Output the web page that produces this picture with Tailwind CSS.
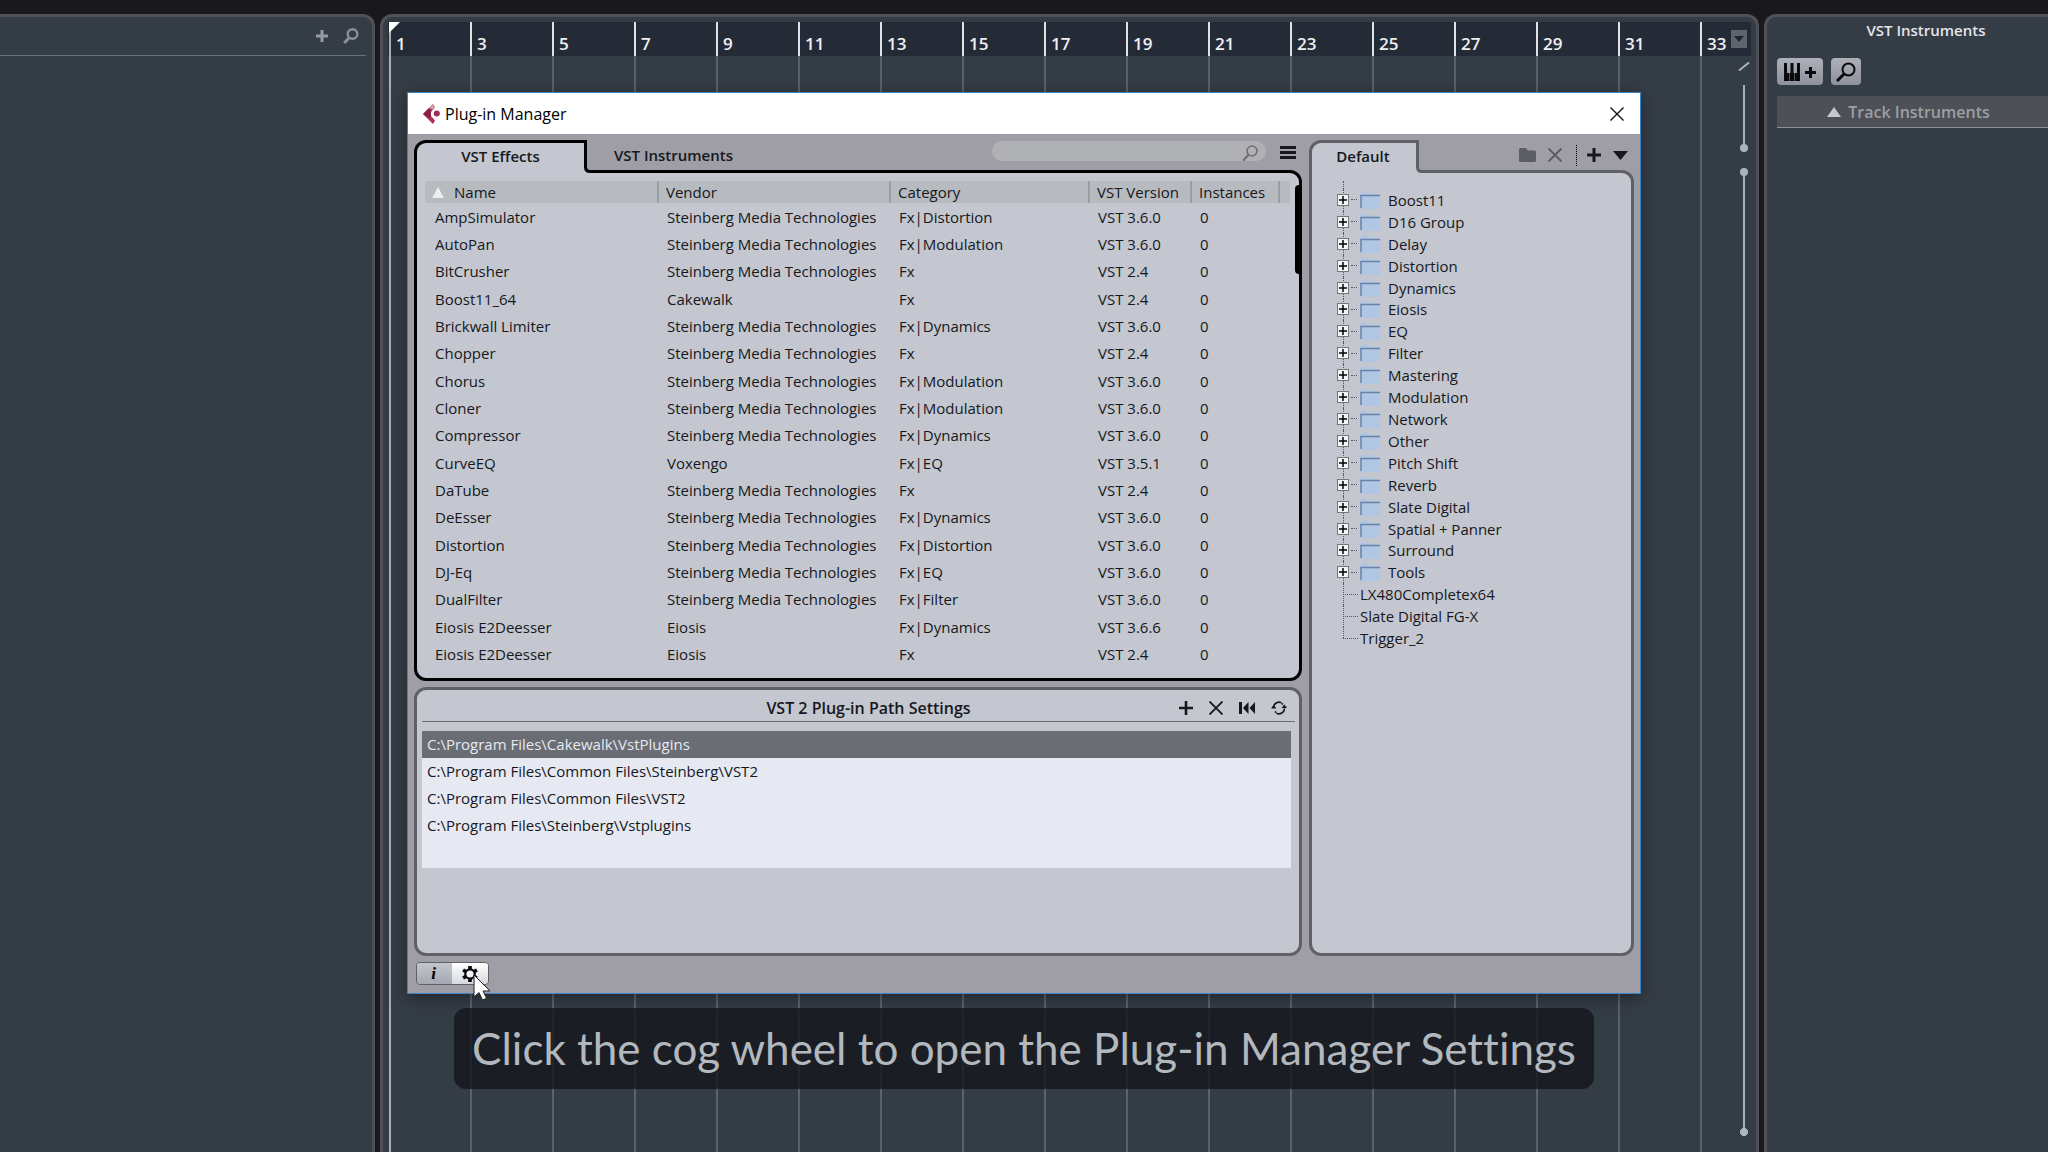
<!DOCTYPE html>
<html lang="en">
<head>
<meta charset="utf-8">
<title>Plug-in Manager</title>
<script src="https://cdn.jsdelivr.net/npm/@tailwindcss/browser@4"></script>
</head>
<body class="relative h-screen overflow-hidden bg-[#19191c] font-['Open_Sans',sans-serif] text-[15px] leading-5 text-[#16181d]">

<!-- Project window -->
<div class="grid h-full grid-cols-[375px_minmax(0,1fr)_284px] gap-[5px] pt-3.5">

  <!-- Inspector -->
  <aside class="rounded-tr-xl border-t-3 border-r-3 border-[#505158] bg-[#343c45] pr-1.5">
    <div class="flex h-[39px] items-center justify-end gap-[15px] border-b border-[#69727a] pr-[7px]">
      <button aria-label="Add"><svg class="block size-3" viewBox="0 0 12 12"><path d="M6 0v12M0 6h12" stroke="#969ba1" stroke-width="3"/></svg></button>
      <button aria-label="Find"><svg class="block size-4" viewBox="0 0 16 16" fill="none" stroke="#8a9097"><circle cx="9.500" cy="6" r="4.800" stroke-width="2.400"/><path d="M6 10 1.200 15" stroke-width="3"/></svg></button>
    </div>
  </aside>

  <!-- Arrangement -->
  <main class="flex flex-col rounded-t-xl border-x-3 border-t-3 border-[#505158] bg-[#343c45] px-[5px] pt-[5px]">
    <div class="relative flex min-h-0 flex-1">
      <div id="ruler" class="flex min-w-0 flex-1 overflow-hidden bg-linear-to-b from-[#242b37] from-[34px] to-[#343c45] to-[34px] pl-px"></div>
      <button aria-label="Ruler format" class="absolute top-2 right-1 flex h-[18px] w-4 items-center justify-center bg-[#5f656f]"><svg class="h-1.5 w-2.5" viewBox="0 0 10 6"><path d="M0 0h10L5 6z" fill="#20262f"/></svg></button>
      <div class="absolute top-10 right-px bottom-0 flex w-3 flex-col items-center pb-4">
        <svg class="h-[9px] w-3" viewBox="0 0 12 9"><path d="M1 8.500 11 .5" stroke="#aab2b8" stroke-width="2"/></svg>
        <input type="range" aria-label="Track height" min="0" max="100" value="100" class="mt-3.5 h-[67px] w-2 appearance-none bg-[linear-gradient(#aab2b8,#aab2b8)] bg-[length:2px_100%] bg-center bg-no-repeat [writing-mode:vertical-lr] [&::-webkit-slider-thumb]:size-2 [&::-webkit-slider-thumb]:appearance-none [&::-webkit-slider-thumb]:rounded-full [&::-webkit-slider-thumb]:bg-[#aab6be]">
        <input type="range" aria-label="Vertical scroll" min="0" max="100" value="0" class="mt-4 min-h-0 w-2 flex-1 appearance-none bg-[radial-gradient(circle_at_50%_calc(100%-4px),#aab6be_4px,transparent_4px),linear-gradient(#aab2b8,#aab2b8)] bg-[length:100%_100%,2px_100%] bg-center bg-no-repeat [writing-mode:vertical-lr] [&::-webkit-slider-thumb]:size-2 [&::-webkit-slider-thumb]:appearance-none [&::-webkit-slider-thumb]:rounded-full [&::-webkit-slider-thumb]:bg-[#aab6be]">
      </div>
    </div>
  </main>

  <!-- Instrument rack -->
  <aside class="rounded-tl-xl border-t-3 border-l-3 border-[#505158] bg-[#343c45] pl-2.5">
    <h2 class="pt-[3px] pr-2 pb-[18px] pl-[35px] text-center font-semibold text-[#e4e6e9]">VST Instruments</h2>
    <div class="flex gap-2">
      <button aria-label="Add track instrument" class="flex h-[27px] w-[46px] items-center justify-center rounded-sm bg-linear-to-b from-[#adb0b8] to-[#8f929b]"><svg class="h-[18px] w-8" viewBox="0 0 32 18" fill="#0b0b0e"><path d="M0 0h3v10h2v8H0zM6.500 0h3v10h1v8h-5v-8h1zM13 0h3v18h-5v-8h2z"/><path d="M26.500 4v11M21 9.500h11" stroke="#0b0b0e" stroke-width="3"/></svg></button>
      <button aria-label="Find instruments" class="flex h-[27px] w-[30px] items-center justify-center rounded-sm bg-linear-to-b from-[#adb0b8] to-[#8f929b]"><svg class="size-5" viewBox="0 0 20 20" fill="none" stroke="#0b0b0e"><circle cx="12.500" cy="7.500" r="6" stroke-width="2"/><path d="m8 12-7 7" stroke-width="3"/></svg></button>
    </div>
    <button class="mt-[11px] flex h-8 w-full items-center justify-center gap-[7px] border-b border-[#8b9196] bg-[#4e5057] pr-2 text-base leading-5 font-semibold text-[#9c9fa4]"><svg class="h-2.5 w-3.5" viewBox="0 0 14 10"><path d="M7 0l7 10H0z" fill="#c6c9cd"/></svg>Track Instruments</button>
  </aside>
</div>

<!-- Dialog and caption -->
<div class="absolute inset-0 flex flex-col items-center gap-3.5 pt-[92px]">
  <section role="dialog" aria-labelledby="title" class="flex w-[1234px] flex-col border border-[#3a86c4] bg-[#9f9ea6] shadow-[0_4px_16px_rgba(0,0,0,0.35)]">
    <header class="flex h-[41px] items-center bg-white pr-4 pl-[15px]">
      <svg class="h-5 w-[17px]" viewBox="0 0 17 20"><path d="M0 10 10 0l2 3.500L8 8v4l4 4.500L10 20z" fill="#a83258"/><path d="M0 10 6 4l2 4v4l-2 2z" fill="#8b1f45"/><path d="M10 0l2 3.500-2 2.200L6 4z" fill="#cf9aac"/><circle cx="13.800" cy="9.500" r="3" fill="#a12c52"/></svg>
      <h1 id="title" class="flex-1 pl-[5px] text-base text-black">Plug-in Manager</h1>
      <button aria-label="Close"><svg class="size-3.5" viewBox="0 0 14 14"><path d="m.5.5 13 13m0-13-13 13" stroke="#111" stroke-width="1.400"/></svg></button>
    </header>

    <div class="grid grid-cols-[888px_minmax(0,1fr)] gap-[7px] px-1.5 pt-1.5">
      <div class="flex flex-col gap-1.5">
        <!-- Plug-in list -->
        <div>
          <div class="flex h-[30px]">
            <button class="relative z-10 h-[33px] w-[173px] rounded-tl-xl border-t-3 border-x-3 border-black bg-[#c4c7cf] pb-1 font-semibold">VST Effects
              <svg class="absolute right-[-8px] bottom-0 size-2" viewBox="0 0 8 8"><path d="M0 0V8H8V6.500H6Q1.500 6.500 1.500 2V0Z" fill="#c4c7cf"/><path d="M1.500 0V2Q1.500 6.500 6 6.500H8" fill="none" stroke="#000" stroke-width="3"/></svg>
            </button>
            <button class="h-[30px] pl-[27px] font-semibold">VST Instruments</button>
            <label class="mt-px mr-3.5 ml-auto flex h-5 w-[274px] items-center rounded-full bg-[#b0b1b4] pr-2 pl-3">
              <input type="search" aria-label="Search plug-ins" class="min-w-0 flex-1 bg-transparent outline-none">
              <svg class="mt-1 size-4" viewBox="0 0 16 16" fill="none" stroke="#6d6e74"><circle cx="10" cy="6" r="5" stroke-width="1.600"/><path d="m6.500 9.800-5.500 6" stroke-width="2"/></svg>
            </label>
            <button aria-label="Display options" class="mr-1.5 flex h-6 w-4 flex-col justify-center gap-0.5"><span class="h-[3px] bg-[#16181d]"></span><span class="h-[3px] bg-[#16181d]"></span><span class="h-[3px] bg-[#16181d]"></span></button>
          </div>
          <div class="relative rounded-xl rounded-tl-none border-3 border-black bg-[#c4c7cf] pt-2 pr-[9px] pb-2.5 pl-2">
            <table class="h-[487px] w-full table-fixed text-left">
              <colgroup><col class="w-[233px]"><col class="w-[232px]"><col class="w-[199px]"><col class="w-[102px]"><col class="w-[88px]"><col></colgroup>
              <thead class="bg-[#b7babf]">
                <tr class="h-[22px]">
                  <th class="border-r-2 border-[#9b9ea3] p-0 pl-[7px] font-normal"><span class="flex items-center gap-2.5"><svg class="h-[11px] w-3" viewBox="0 0 12 11"><path d="M6 0l6 11H0z" fill="#eceef1"/></svg>Name</span></th>
                  <th class="border-r-2 border-[#9b9ea3] p-0 pl-[7px] font-normal">Vendor</th>
                  <th class="border-r-2 border-[#9b9ea3] p-0 pl-[7px] font-normal">Category</th>
                  <th class="border-r-2 border-[#9b9ea3] p-0 pl-[7px] font-normal whitespace-nowrap">VST Version</th>
                  <th class="border-r-2 border-[#9b9ea3] p-0 pl-[7px] font-normal">Instances</th>
                  <th class="p-0"></th>
                </tr>
              </thead>
              <tbody id="plugins"></tbody>
            </table>
            <div class="absolute top-3 right-0 h-[89px] w-1 rounded-l-full bg-black"></div>
          </div>
        </div>

        <!-- Path settings -->
        <div class="h-[269px] rounded-xl border-3 border-[#606167] bg-[#c4c7cf] pt-1 pr-1 pl-[5px]">
          <div class="grid h-7 grid-cols-[1fr_auto_1fr] items-center border-b border-[#6b6d74]">
            <h2 class="col-start-2 pl-5 text-base leading-5 font-semibold">VST 2 Plug-in Path Settings</h2>
            <div class="flex items-center justify-end gap-4 pr-2">
              <button aria-label="Add path"><svg class="block size-3.5" viewBox="0 0 14 14"><path d="M7 0v14M0 7h14" stroke="#16181d" stroke-width="2.600"/></svg></button>
              <button aria-label="Remove path"><svg class="block size-3.5" viewBox="0 0 14 14"><path d="m.5.5 13 13m0-13-13 13" stroke="#16181d" stroke-width="1.800"/></svg></button>
              <button aria-label="Reset paths"><svg class="block h-3 w-4" viewBox="0 0 16 12" fill="#16181d"><path d="M0 0h3v12H0zM9.500 0v12L4 6zM16 0v12l-5.500-6z"/></svg></button>
              <button aria-label="Rescan"><svg class="block size-4" viewBox="0 0 16 16" fill="none" stroke="#16181d" stroke-width="1.700"><path d="M2.500 7.500A5.500 5.500 0 0 1 10.500 2.800M13.500 8.500A5.500 5.500 0 0 1 5.500 13.200M4 11.500l1.200 1.200M12 4.500l-1.200-1.200"/><path d="M0 8.500h5.400L2.700 5zM10.600 8H16l-2.700-3.500z" fill="#16181d" stroke="none"/></svg></button>
            </div>
          </div>
          <ul class="mt-[9px] mr-1 h-[137px] bg-[#e6e9f2]">
            <li class="h-[27px] bg-[#6b6d75] py-[3px] pl-[5px] text-[#e6e9f2]">C:\Program Files\Cakewalk\VstPlugins</li>
            <li class="h-[27px] py-[3px] pl-[5px]">C:\Program Files\Common Files\Steinberg\VST2</li>
            <li class="h-[27px] py-[3px] pl-[5px]">C:\Program Files\Common Files\VST2</li>
            <li class="h-[27px] py-[3px] pl-[5px]">C:\Program Files\Steinberg\Vstplugins</li>
          </ul>
        </div>
      </div>

      <!-- Collection -->
      <div class="flex flex-col">
        <div class="flex h-[30px]">
          <button class="relative z-10 h-[33px] w-[110px] rounded-tl-xl border-t-3 border-x-3 border-[#606167] bg-[#c4c7cf] pr-0.5 pb-1 font-semibold">Default
            <svg class="absolute right-[-8px] bottom-0 size-2" viewBox="0 0 8 8"><path d="M0 0V8H8V6.500H6Q1.500 6.500 1.500 2V0Z" fill="#c4c7cf"/><path d="M1.500 0V2Q1.500 6.500 6 6.500H8" fill="none" stroke="#606167" stroke-width="3"/></svg>
          </button>
          <div class="ml-auto flex items-center pr-1.5">
            <button aria-label="New folder"><svg class="h-3.5 w-[17px]" viewBox="0 0 17 14"><path d="M0 1.500Q0 0 1.500 0H7l2 2.500h6.500Q17 2.500 17 4v8.500Q17 14 15.500 14h-14Q0 14 0 12.500z" fill="#5d5e65"/></svg></button>
            <button aria-label="Delete" class="mr-3.5 ml-3"><svg class="size-3.5" viewBox="0 0 14 14"><path d="m.5.5 13 13m0-13-13 13" stroke="#5d5e65" stroke-width="2"/></svg></button>
            <span class="h-[21px] border-l border-dotted border-black"></span>
            <button aria-label="Add collection" class="mr-3 ml-2.5"><svg class="size-3.5" viewBox="0 0 14 14"><path d="M7 0v14M0 7h14" stroke="#16181d" stroke-width="3"/></svg></button>
            <button aria-label="Select collection"><svg class="h-[9px] w-[15px]" viewBox="0 0 15 9"><path d="M0 0h15L7.500 9z" fill="#16181d"/></svg></button>
          </div>
        </div>
        <div class="flex-1 rounded-xl rounded-tl-none border-3 border-[#606167] bg-[#c4c7cf] pt-2 pl-[30px]">
          <div class="ml-px h-2 border-l border-dotted border-[#55575e]"></div>
          <ul id="tree" class="grid h-[460px] auto-rows-fr"></ul>
        </div>
      </div>
    </div>

    <footer class="flex px-2 pt-1.5 pb-2">
      <div class="flex h-[23px] w-[73px] overflow-hidden rounded-sm border border-[#606167]">
        <button aria-label="Plug-in information" class="w-[35px] bg-linear-to-b from-[#c3c6cd] to-[#a5a8b0] pr-0.5 font-['Liberation_Serif',serif] text-[17px] font-bold text-black italic">i</button>
        <button aria-label="Settings" class="flex flex-1 items-center justify-center bg-linear-to-b from-white to-[#d5d8dd]"><svg class="size-4" viewBox="-8 -8 16 16"><path d="M0-8V8M-6.900-4 6.900 4M-6.900 4 6.900-4" stroke="#08080a" stroke-width="3.600"/><circle r="5.800" fill="#08080a"/><circle r="3.600" fill="#f2f3f5"/></svg></button>
      </div>
    </footer>
  </section>

  <p class="rounded-xl bg-[#14161b]/80 px-[18px] py-3.5 font-['Lato',sans-serif] text-[44px] leading-[53px] whitespace-nowrap text-[#b3b8be] [font-variant-ligatures:none]">Click the cog wheel to open the Plug-in Manager Settings</p>
</div>

<!-- Mouse pointer -->
<svg class="absolute top-[974px] left-[473px] h-[27px] w-[19px]" viewBox="0 0 19 27"><path d="M1 1v22l5-4.500 3.500 7.500 4-1.800L10 17h7z" fill="#fff" stroke="#222" stroke-width="1"/></svg>

<script>
const marks = Array.from({length: 17}, (_, i) => i * 2 + 1);
document.getElementById('ruler').innerHTML = marks.map((n, i) => i === 0
  ? `<div class="relative w-[81px] shrink-0 border-l-2 border-[#a9afb3] pt-3 pl-[5px] text-[17px] leading-5 font-semibold text-[#eef0f2]"><svg class="absolute top-0 left-[-2px] size-[11px]" viewBox="0 0 11 11"><path d="M0 0h11L0 11z" fill="#fff"/></svg>${n}</div>`
  : `<div class="w-[82px] shrink-0 border-l-2 border-[#59626a] text-[17px] leading-5 font-semibold text-[#eef0f2]"><div class="-ml-0.5 h-[34px] border-l-2 border-[#dfe2e5] pt-3 pl-[5px]">${n}</div></div>`).join('');

const S = 'Steinberg Media Technologies';
const plugins = [
  ['AmpSimulator', S, 'Fx|Distortion', '3.6.0'], ['AutoPan', S, 'Fx|Modulation', '3.6.0'],
  ['BitCrusher', S, 'Fx', '2.4'], ['Boost11_64', 'Cakewalk', 'Fx', '2.4'],
  ['Brickwall Limiter', S, 'Fx|Dynamics', '3.6.0'], ['Chopper', S, 'Fx', '2.4'],
  ['Chorus', S, 'Fx|Modulation', '3.6.0'], ['Cloner', S, 'Fx|Modulation', '3.6.0'],
  ['Compressor', S, 'Fx|Dynamics', '3.6.0'], ['CurveEQ', 'Voxengo', 'Fx|EQ', '3.5.1'],
  ['DaTube', S, 'Fx', '2.4'], ['DeEsser', S, 'Fx|Dynamics', '3.6.0'],
  ['Distortion', S, 'Fx|Distortion', '3.6.0'], ['DJ-Eq', S, 'Fx|EQ', '3.6.0'],
  ['DualFilter', S, 'Fx|Filter', '3.6.0'], ['Eiosis E2Deesser', 'Eiosis', 'Fx|Dynamics', '3.6.6'],
  ['Eiosis E2Deesser', 'Eiosis', 'Fx', '2.4']
];
document.getElementById('plugins').innerHTML = plugins.map(([name, vendor, category, version]) =>
  `<tr><td class="p-0 pl-2.5">${name}</td><td class="p-0 pl-[9px] whitespace-nowrap">${vendor}</td><td class="p-0 pl-[9px]">${category}</td><td class="p-0 pl-[9px]">VST ${version}</td><td class="p-0 pl-[9px]">0</td><td class="p-0"></td></tr>`).join('');

const folders = ['Boost11', 'D16 Group', 'Delay', 'Distortion', 'Dynamics', 'Eiosis', 'EQ', 'Filter', 'Mastering', 'Modulation', 'Network', 'Other', 'Pitch Shift', 'Reverb', 'Slate Digital', 'Spatial + Panner', 'Surround', 'Tools'];
const leaves = ['LX480Completex64', 'Slate Digital FG-X', 'Trigger_2'];
document.getElementById('tree').innerHTML =
  folders.map(f => `<li class="relative flex items-center"><span class="absolute inset-y-0 left-px border-l border-dotted border-[#55575e]"></span><button aria-label="Expand ${f}" class="relative -ml-[5px] flex size-3 items-center justify-center border border-[#74767c] bg-[#f2f4f6]"><svg class="size-2" viewBox="0 0 8 8"><path d="M4 0v8M0 4h8" stroke="#000" stroke-width="1.500"/></svg></button><span class="mr-[3px] ml-0.5 w-1.5 border-t border-dotted border-[#55575e]"></span><svg class="mr-2 h-[18px] w-5" viewBox="0 0 20 18"><path d="M0 3Q3-1 8 .5L10 3h9.500v15H0z" fill="#b0c6e3"/><path d="M1 17V4.500h19" fill="none" stroke="#6882a8" stroke-width="1.500"/></svg>${f}</li>`).join('') +
  leaves.map((f, i) => `<li class="relative flex items-center"><span class="absolute top-0 left-px border-l border-dotted border-[#55575e] ${i === 2 ? 'h-1/2' : 'h-full'}"></span><span class="mr-0.5 ml-px w-[15px] border-t border-dotted border-[#55575e]"></span>${f}</li>`).join('');
</script>
</body>
</html>
